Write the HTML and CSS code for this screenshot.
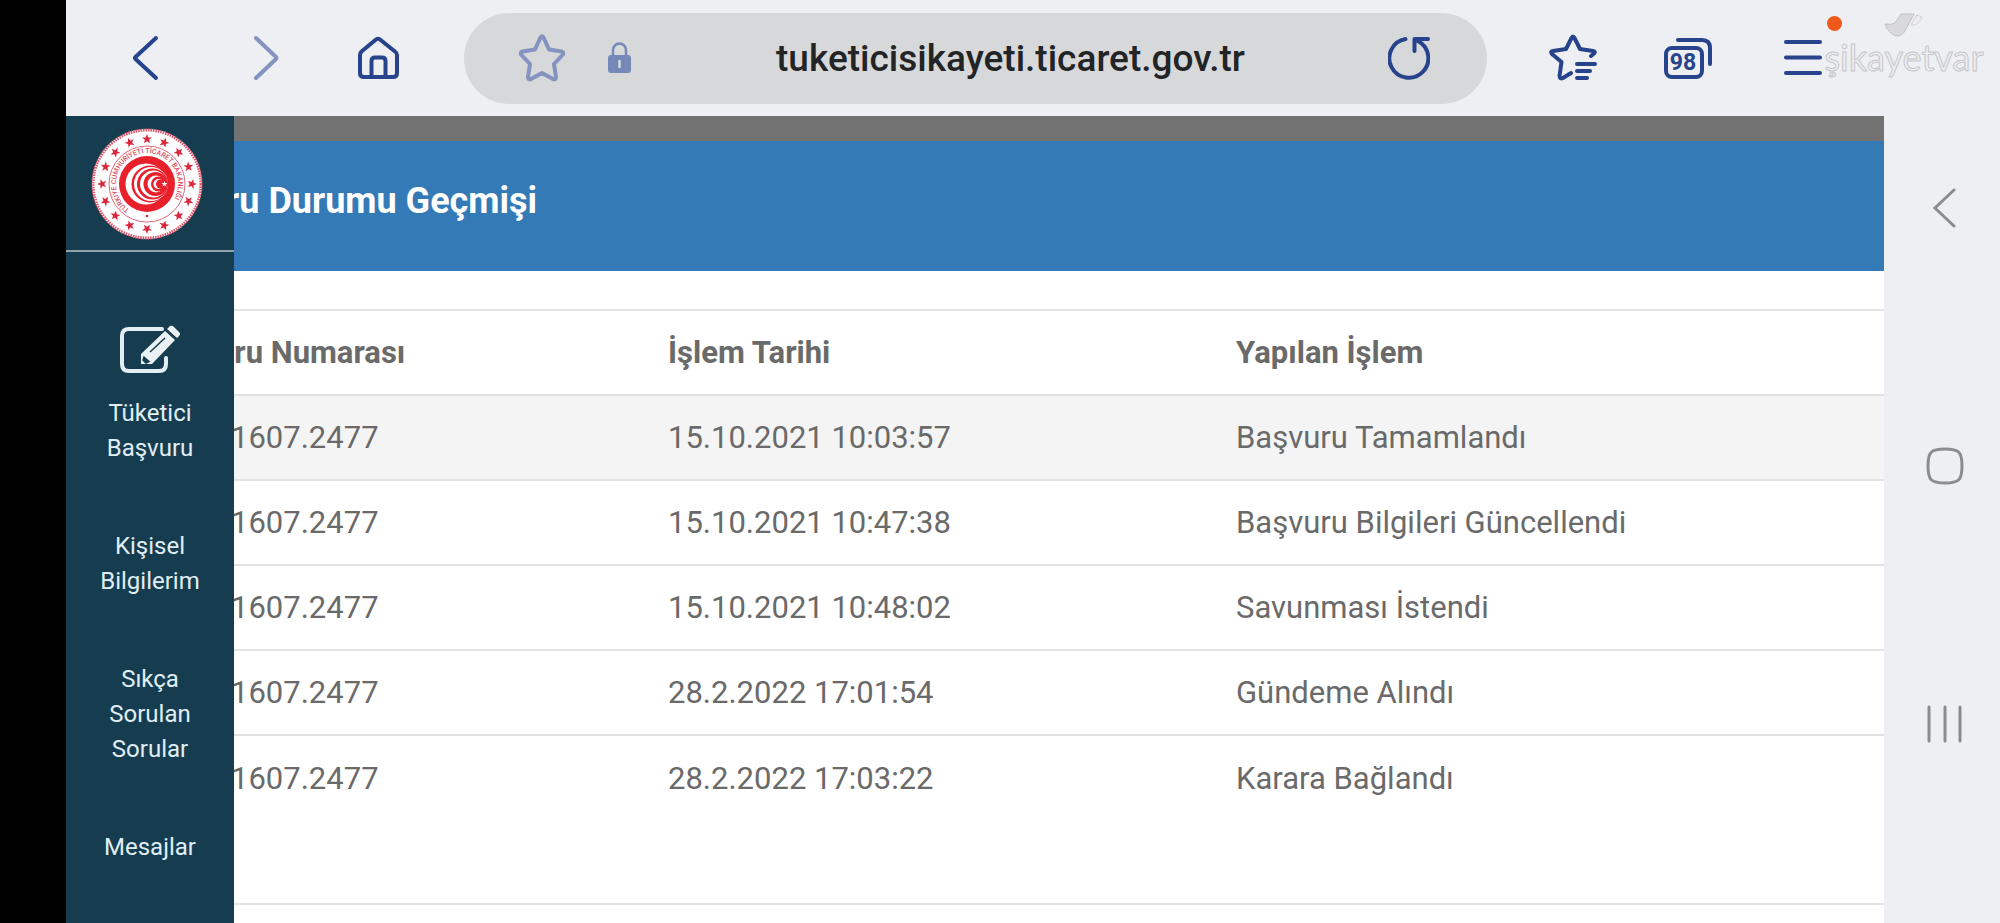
FILE: index.html
```html
<!DOCTYPE html>
<html lang="tr">
<head>
  <meta charset="UTF-8">
  <meta name="viewport" content="width=device-width, initial-scale=1">
  <title>Başvuru Durumu Geçmişi</title>
  <link rel="stylesheet" href="styles.css">
</head>
<body>

  <div class="screen">

    <header class="toolbar">
      <div class="left-buttons">
        <button type="button" aria-label="Geri">
          <svg width="48" height="48" viewBox="0 0 48 48"><path d="M34 4L13.500 23Q12.500 24 13.500 25L34 44"/></svg>
        </button>
        <button type="button" class="faded" aria-label="İleri">
          <svg width="48" height="48" viewBox="0 0 48 48"><path d="M18 4L38 23Q39 24 38 25L18 44"/></svg>
        </button>
        <button type="button" aria-label="Ana sayfa">
          <svg width="48" height="48" viewBox="0 0 48 48"><path d="M6 21Q6 19 7.500 17.500L22 5.500Q24 4 26 5.500L41 17.500Q43 19 43 21V39Q43 43 39 43H10Q6 43 6 39ZM17.500 43V27Q17.500 23.500 21 23.500H28Q31.500 23.500 31.500 27V43"/></svg>
        </button>
      </div>

      <form class="address">
        <button type="button" class="faded" aria-label="Yer imi ekle">
          <svg width="46" height="48" viewBox="0 0 46 48"><path d="M21.500 3.500Q23 1 24.500 3.500L30 15.500L42.500 17.500Q45.500 18.500 43.500 21L35 30L37 43Q37 46 34 45L23 39L12 45Q9 46 9 43L11 30L2.500 21Q.5 18.500 3.500 17.500L16 15.500Z"/></svg>
        </button>
        <svg class="lock" width="23" height="32" viewBox="0 0 23 32"><path d="M5 14V8a6.500 6.500 0 0 1 13 0v6" fill="none" stroke="#7688b8" stroke-width="2.500"/><rect y="13" width="23" height="18" rx="3" fill="#7688b8"/><path d="M11.500 19v6" stroke="#d7d8da" stroke-width="2.500" stroke-linecap="round"/></svg>
        <input type="text" value="tuketicisikayeti.ticaret.gov.tr" aria-label="Adres">
        <button type="button" aria-label="Yenile">
          <svg width="42" height="48" viewBox="0 0 42 48"><path d="M17.500 5A19.500 19.500 0 1 0 30 7M40 5H26.500V17"/></svg>
        </button>
      </form>

      <div class="right-buttons">
        <button type="button" aria-label="Yer imleri">
          <svg width="48" height="48" viewBox="0 0 48 48"><path d="M42 22L45 19.500Q47 17.500 44 17L31 15L25.500 4Q24 1 22.500 4L17 15L4 17Q1 17.500 3 20L12.500 28L10.500 42Q11 45.500 14 44L22 39M28 30H46M28 37H41M28 44H38"/></svg>
        </button>
        <button type="button" aria-label="Sekmeler" class="tabs">
          <svg width="48" height="48" viewBox="0 0 48 48"><rect x="2" y="14" width="36" height="29" rx="6"/><path d="M14 6H38Q46 6 46 14V30"/></svg>
          <span>98</span>
        </button>
        <button type="button" aria-label="Menü">
          <svg width="48" height="48" viewBox="0 0 48 48"><path d="M7 8H41M7 23.500H41M7 39H41"/></svg>
        </button>
      </div>

      <!-- site filigranı -->
      <div class="watermark">
        <svg width="40" height="24" viewBox="0 0 40 24"><path d="M1 11Q7 12 11 10L17 1H30L21 18Q18 23 12 23Q4 20 1 11Z" fill="#d9d9dc" stroke="#c2c2c6"/><path d="M33 2L27 12Q34 13 38 4Z" fill="none" stroke="#c2c2c6" stroke-dasharray="2 1"/></svg>
        <span>şikayetvar</span>
      </div>
      <i class="dot"></i>
    </header>

    <div class="page">
      <nav class="sidebar">
        <a href="#" class="seal">
          <svg width="112" height="112" viewBox="-56 -56 112 112" role="img" aria-label="Türkiye Cumhuriyeti Ticaret Bakanlığı">
            <defs>
              <path id="star" d="M0-50L1.300-46.500H5L2.100-44.200L3.100-40.700L0-42.800L-3.100-40.700L-2.100-44.200L-5-46.500H-1.300Z"/>
              <path id="ring" d="M-17.500 25.500A31 31 0 1 1 17.500 25.500"/>
            </defs>
            <circle r="55" fill="#fff"/>
            <circle r="54" fill="none" stroke="#e0566b" stroke-width="3" stroke-dasharray="1.600 .9"/>
            <g fill="#d9283c">
              <use href="#star"/>
              <use href="#star" transform="rotate(22.500)"/>
              <use href="#star" transform="rotate(45)"/>
              <use href="#star" transform="rotate(67.500)"/>
              <use href="#star" transform="rotate(90)"/>
              <use href="#star" transform="rotate(112.500)"/>
              <use href="#star" transform="rotate(135)"/>
              <use href="#star" transform="rotate(157.500)"/>
              <use href="#star" transform="rotate(180)"/>
              <use href="#star" transform="rotate(202.500)"/>
              <use href="#star" transform="rotate(225)"/>
              <use href="#star" transform="rotate(247.500)"/>
              <use href="#star" transform="rotate(270)"/>
              <use href="#star" transform="rotate(292.500)"/>
              <use href="#star" transform="rotate(315)"/>
              <use href="#star" transform="rotate(337.500)"/>
            </g>
            <circle r="38" fill="none" stroke="#dc6a78"/>
            <text class="seal-text"><textPath href="#ring">TÜRKİYE CUMHURİYETİ TİCARET BAKANLIĞI</textPath></text>
            <circle cy="32" r="1.300" fill="#d9283c"/>
            <circle r="28" fill="#e8202c"/>
            <circle cx="-1" r="20.500" fill="#fff"/>
            <circle cx="3" r="18.500" fill="#e8202c"/>
            <circle cx="4" r="17" fill="#fff"/>
            <circle cx="5.500" r="15.500" fill="#e8202c"/>
            <circle cx="6.500" r="13.500" fill="#fff"/>
            <circle cx="8.500" r="12" fill="#e8202c"/>
            <circle cx="9" r="8.500" fill="#fff"/>
            <circle cx="11.500" r="7.500" fill="#e8202c"/>
            <circle cx="11.500" r="5" fill="#fff"/>
            <circle cx="13.500" r="4.500" fill="#e8202c"/>
            <use href="#star" fill="#fff" transform="translate(17.500 27) scale(.6)"/>
          </svg>
        </a>
        <ul>
          <li>
            <a href="#">
              <svg width="62" height="52" viewBox="0 0 62 52"><path d="M43 4H10Q3 4 3 11V39Q3 46 10 46H40Q47 46 47 39V33" fill="none" stroke="#e4eef2" stroke-width="4" stroke-linecap="round"/><path d="M22 39V29L46 6L56 15L33 39ZM48 4L51 1Q53 0 55 2L60 7Q62 9 60 11L58 13Z" fill="#eaf1f3"/><path d="M25 32L30 36.500L27 38L24 35ZM31 27L46 13" fill="#163c50" stroke="#163c50" stroke-width="1.500"/></svg>
              Tüketici Başvuru
            </a>
          </li>
          <li><a href="#">Kişisel Bilgilerim</a></li>
          <li><a href="#">Sıkça Sorulan Sorular</a></li>
          <li><a href="#">Mesajlar</a></li>
        </ul>
      </nav>

      <main class="modal">
        <h1>Başvuru Durumu Geçmişi</h1>
        <div class="modal-body">
          <table>
            <thead>
              <tr><th>Başvuru Numarası</th><th>İşlem Tarihi</th><th>Yapılan İşlem</th></tr>
            </thead>
            <tbody>
              <tr><td>1607.2477</td><td>15.10.2021 10:03:57</td><td>Başvuru Tamamlandı</td></tr>
              <tr><td>1607.2477</td><td>15.10.2021 10:47:38</td><td>Başvuru Bilgileri Güncellendi</td></tr>
              <tr><td>1607.2477</td><td>15.10.2021 10:48:02</td><td>Savunması İstendi</td></tr>
              <tr><td>1607.2477</td><td>28.2.2022 17:01:54</td><td>Gündeme Alındı</td></tr>
              <tr><td>1607.2477</td><td>28.2.2022 17:03:22</td><td>Karara Bağlandı</td></tr>
            </tbody>
          </table>
        </div>
      </main>

      <aside class="phone-nav">
        <button type="button" aria-label="Geri"><svg width="38" height="40" viewBox="0 0 38 40"><path d="M28 2L9 20L28 38"/></svg></button>
        <button type="button" aria-label="Ana ekran"><svg width="38" height="40" viewBox="0 0 38 40"><path d="M19 3C33 3 36 6 36 20S33 37 19 37S2 34 2 20S5 3 19 3Z"/></svg></button>
        <button type="button" aria-label="Son uygulamalar"><svg width="38" height="40" viewBox="0 0 38 40"><path d="M3 3V37M19 3V37M34 3V37"/></svg></button>
      </aside>
    </div>

  </div>

</body>
</html>
```
FILE: styles.css
```css
* {
  box-sizing: border-box;
}

body {
  margin: 0;
  background-color: #000;
  font-family: Roboto, sans-serif;
  color: #6a6a6a;
  overflow: hidden;
}

button {
  display: flex;
  align-items: center;
  justify-content: center;
  padding: 0;
  border: none;
  background: none;
  cursor: pointer;
}

svg {
  display: block;
}

.screen {
  display: flex;
  flex-direction: column;
  min-height: 100vh;
  margin-left: 66px;
  background-color: #edeff3;
}

/* tarayıcı çubuğu */
.toolbar {
  position: relative;
  display: flex;
  align-items: center;
  height: 116px;
  padding-left: 22px;
  padding-right: 140px;
}

.toolbar button svg {
  fill: none;
  stroke: #26438c;
  stroke-width: 4;
  stroke-linecap: round;
  stroke-linejoin: round;
}

.toolbar .faded svg {
  stroke: #8493bf;
}

.left-buttons,
.right-buttons {
  display: flex;
}

.left-buttons button {
  width: 116px;
}

.right-buttons button {
  width: 115px;
}

.address {
  flex: 1;
  display: flex;
  align-items: center;
  height: 91px;
  margin: 0 28px;
  padding: 0 57px 0 55px;
  border-radius: 46px;
  background-color: #d7d8da;
}

.lock {
  margin: 0 2px 0 43px;
}

.address input {
  flex: 1;
  min-width: 0;
  padding: 0;
  border: none;
  background: none;
  font-family: Roboto, sans-serif;
  font-size: 37px;
  font-weight: 500;
  text-align: center;
  color: #222426;
}

.tabs {
  position: relative;
}

.tabs span {
  position: absolute;
  top: 14px;
  left: 33px;
  width: 40px;
  line-height: 30px;
  font-family: Roboto, sans-serif;
  font-size: 23px;
  font-weight: 700;
  color: #26438c;
}

.dot {
  position: absolute;
  top: 16px;
  right: 158px;
  width: 15px;
  height: 15px;
  border-radius: 50%;
  background-color: #f0591a;
}

.watermark {
  position: absolute;
  top: 13px;
  right: 16px;
  display: flex;
  flex-direction: column;
  align-items: center;
  width: 160px;
}

.watermark span {
  font-family: Lato, sans-serif;
  font-size: 36px;
  line-height: 40px;
  color: #edeef1;
  -webkit-text-stroke: 1px #c6c6ca;
}

/* sayfa */
.page {
  position: relative;
  flex: 1;
  display: flex;
}

.sidebar {
  position: absolute;
  top: 0;
  bottom: 0;
  left: 0;
  width: 168px;
  background-color: #163c50;
}

.seal {
  display: flex;
  justify-content: center;
  height: 136px;
  padding-top: 12px;
  padding-right: 6px;
  border-bottom: 2px solid #8fa2ae;
}

.seal-text {
  font-size: 7px;
  font-weight: 500;
  fill: #dc4a5c;
}

.sidebar ul {
  display: flex;
  flex-direction: column;
  gap: 63px;
  margin: 0;
  padding: 73px 24px 0 24px;
  list-style: none;
}

.sidebar li a {
  display: block;
  font-size: 24px;
  line-height: 35px;
  text-align: center;
  text-decoration: none;
  color: #e0eef5;
}

.sidebar li svg {
  margin: 0 auto 19px auto;
}

.modal {
  flex: 1;
  border-top: 25px solid #727272;
  background-color: #fff;
}

h1 {
  height: 130px;
  margin: 0;
  padding-left: 61px;
  font-size: 36px;
  line-height: 120px;
  color: #fff;
  background-color: #337ab7;
}

.modal-body {
  padding: 38px 0 83px 0;
  border-bottom: 2px solid #e4e4e4;
}

table {
  width: 100%;
  border-collapse: collapse;
  table-layout: fixed;
}

th,
td {
  height: 85px;
  padding: 0;
  border-top: 2px solid #e2e2e2;
  font-size: 31px;
  text-align: left;
}

th:nth-child(1) {
  width: 602px;
  padding-left: 83px;
}

th:nth-child(2) {
  width: 568px;
}

td:first-child {
  padding-left: 165px;
}

tbody tr:first-child {
  background-color: #f4f4f4;
}

/* telefonun gezinme tuşları */
.phone-nav {
  display: flex;
  flex-direction: column;
  gap: 218px;
  width: 116px;
  padding: 72px 0 0 6px;
}

.phone-nav svg {
  fill: none;
  stroke: #8b8c8f;
  stroke-width: 3;
  stroke-linecap: round;
}
```
